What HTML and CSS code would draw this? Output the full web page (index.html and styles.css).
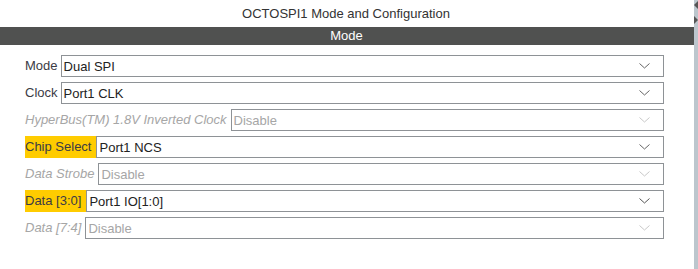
FILE: index.html
```html
<!DOCTYPE html>
<html>
<head>
<meta charset="utf-8">
<link rel="stylesheet" href="styles.css">
</head>
<body>
<div class="page">
  <div class="main">
    <div class="title">OCTOSPI1 Mode and Configuration</div>
    <div class="bar">Mode</div>
    <div class="form">
      <div class="row">
        <span class="label">Mode</span>
        <div class="select"><span class="val">Dual SPI</span><svg class="chev" width="11" height="6" viewBox="0 0 11 6"><polyline points="0.5,0.5 5.5,5 10.5,0.5" fill="none" stroke="#666" stroke-width="1"/></svg></div>
      </div>
      <div class="row">
        <span class="label">Clock</span>
        <div class="select"><span class="val">Port1 CLK</span><svg class="chev" width="11" height="6" viewBox="0 0 11 6"><polyline points="0.5,0.5 5.5,5 10.5,0.5" fill="none" stroke="#666" stroke-width="1"/></svg></div>
      </div>
      <div class="row">
        <span class="label off">HyperBus(TM) 1.8V Inverted Clock</span>
        <div class="select dis"><span class="val">Disable</span><svg class="chev" width="11" height="6" viewBox="0 0 11 6"><polyline points="0.5,0.5 5.5,5 10.5,0.5" fill="none" stroke="#c8c8c8" stroke-width="1"/></svg></div>
      </div>
      <div class="row">
        <span class="label hi">Chip Select</span>
        <div class="select"><span class="val">Port1 NCS</span><svg class="chev" width="11" height="6" viewBox="0 0 11 6"><polyline points="0.5,0.5 5.5,5 10.5,0.5" fill="none" stroke="#666" stroke-width="1"/></svg></div>
      </div>
      <div class="row">
        <span class="label off">Data Strobe</span>
        <div class="select dis"><span class="val">Disable</span><svg class="chev" width="11" height="6" viewBox="0 0 11 6"><polyline points="0.5,0.5 5.5,5 10.5,0.5" fill="none" stroke="#c8c8c8" stroke-width="1"/></svg></div>
      </div>
      <div class="row">
        <span class="label hi">Data [3:0]</span>
        <div class="select"><span class="val">Port1 IO[1:0]</span><svg class="chev" width="11" height="6" viewBox="0 0 11 6"><polyline points="0.5,0.5 5.5,5 10.5,0.5" fill="none" stroke="#555" stroke-width="1"/></svg></div>
      </div>
      <div class="row">
        <span class="label off">Data [7:4]</span>
        <div class="select dis"><span class="val">Disable</span><svg class="chev" width="11" height="6" viewBox="0 0 11 6"><polyline points="0.5,0.5 5.5,5 10.5,0.5" fill="none" stroke="#c8c8c8" stroke-width="1"/></svg></div>
      </div>
    </div>
  </div>
  <div class="side">
    <svg width="4" height="26" viewBox="0 0 4 26"><polygon points="4,1 0,5 4,9" fill="#555"/><polygon points="0,16 4,20 0,24" fill="#555"/></svg>
  </div>
</div>
</body>
</html>
```
FILE: styles.css
```css
html, body {
  margin: 0;
  padding: 0;
  background: #fff;
}
body {
  font-family: "Liberation Sans", Arial, sans-serif;
  font-size: 13px;
}
.page {
  display: flex;
  width: 698px;
  height: 269px;
}
.main {
  width: 694px;
  display: flex;
  flex-direction: column;
}
.side {
  width: 4px;
  background: #bcc6cd;
  display: flex;
  flex-direction: column;
}
.title {
  height: 27px;
  line-height: 27px;
  text-align: center;
  color: #333;
  padding-right: 2px;
}
.bar {
  height: 18px;
  line-height: 18px;
  background: #505150;
  color: #fff;
  text-align: center;
  padding-right: 1px;
}
.form {
  display: flex;
  flex-direction: column;
  gap: 5px;
  padding: 10px 30px 0 25px;
}
.row {
  display: flex;
  align-items: stretch;
  height: 22px;
}
.label {
  color: #3b3b45;
  line-height: 22px;
  padding-right: 3px;
  white-space: nowrap;
}
.label.off {
  color: #a6a6a6;
  font-style: italic;
  padding-right: 4px;
}
.label.hi {
  background: #ffcc00;
  padding-right: 5px;
}
.select {
  flex: 1;
  box-sizing: border-box;
  border: 1px solid #8e9296;
  display: flex;
  align-items: center;
  justify-content: space-between;
  padding: 0 13px 0 2px;
  color: #222;
}
.select.dis {
  color: #a6a6a6;
}
.chev {
  display: block;
}
```
